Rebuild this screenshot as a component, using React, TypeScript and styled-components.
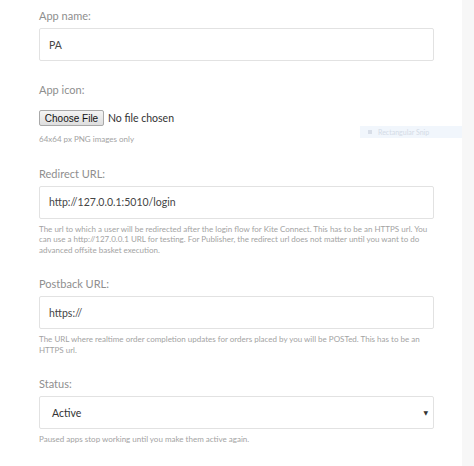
import { createGlobalStyle, styled } from 'styled-components'

const GlobalStyle = createGlobalStyle`
  html, body {
    margin: 0;
    padding: 0;
    background: #ffffff;
  }
  body {
    font-family: Lato, "Open Sans", "DejaVu Sans", sans-serif;
  }
`

type Field = {
  label: string
  value: string
  help?: string
  kind: 'text' | 'file' | 'select'
}

const fields: Field[] = [
  { label: 'App name:', value: 'PA', kind: 'text' },
  { label: 'App icon:', value: '', help: '64x64 px PNG images only', kind: 'file' },
  {
    label: 'Redirect URL:',
    value: 'http://127.0.0.1:5010/login',
    help: 'The url to which a user will be redirected after the login flow for Kite Connect. This has to be an HTTPS url. You can use a http://127.0.0.1 URL for testing. For Publisher, the redirect url does not matter until you want to do advanced offsite basket execution.',
    kind: 'text',
  },
  {
    label: 'Postback URL:',
    value: 'https://',
    help: 'The URL where realtime order completion updates for orders placed by you will be POSTed. This has to be an HTTPS url.',
    kind: 'text',
  },
  {
    label: 'Status:',
    value: 'Active',
    help: 'Paused apps stop working until you make them active again.',
    kind: 'select',
  },
]

export default function App() {
  return <Page>
    <GlobalStyle />
    <Form>
      {fields.map((field) => (
        <Group key={field.label}>
          <Label>{field.label}</Label>
          {field.kind === 'text' && <TextBox>{field.value}</TextBox>}
          {field.kind === 'file' && (
            <FileRow>
              <FileButton type="button">Choose File</FileButton>
              <FileName>No file chosen</FileName>
            </FileRow>
          )}
          {field.kind === 'select' && (
            <SelectBox>
              <span>{field.value}</span>
              <Caret>▼</Caret>
            </SelectBox>
          )}
          {field.help && <Help $tight={field.kind === 'file'}>{field.help}</Help>}
        </Group>
      ))}
    </Form>
    <Gutter />
    <SnipTip><SnipIcon />Rectangular Snip</SnipTip>
  </Page>
}

const Page = styled.div`
  position: relative;
  display: flex;
  min-height: 466px;
  overflow: hidden;
`
const Form = styled.div`
  flex: 1;
  display: flex;
  flex-direction: column;
  gap: 21px;
  padding: 8px 28px 0 39px;
`
const Group = styled.div`
  display: flex;
  flex-direction: column;
`
const Label = styled.div`
  font-size: 11px;
  line-height: 16px;
  color: #8e8e8e;
  margin-bottom: 4px;
`
const TextBox = styled.div`
  height: 33px;
  box-sizing: border-box;
  border: 1px solid #e2e2e2;
  border-radius: 2px;
  padding: 0 9px;
  display: flex;
  align-items: center;
  font-size: 10.5px;
  color: #454545;
`
const FileRow = styled.div`
  display: flex;
  align-items: center;
  gap: 4px;
  margin-top: 8px;
`
const FileButton = styled.button`
  height: 16px;
  width: 65px;
  padding: 0;
  box-sizing: border-box;
  border: 1px solid #a9a9a9;
  border-radius: 2px;
  background: linear-gradient(#f4f4f4, #dedede);
  font-family: "Liberation Sans", Arial, sans-serif;
  font-size: 10px;
  color: #111111;
`
const FileName = styled.span`
  font-size: 10.5px;
  color: #333333;
`
const SelectBox = styled(TextBox)`
  justify-content: space-between;
  padding: 0 5px 0 12px;
  color: #333333;
`
const Caret = styled.span`
  font-size: 6px;
  color: #333333;
`
const Help = styled.div<{ $tight?: boolean }>`
  margin-top: ${(p) => (p.$tight ? '8px' : '5px')};
  font-size: 8px;
  line-height: 10.5px;
  color: #a3a3a3;
`
const Gutter = styled.div`
  width: 12px;
  background: #f7f7f7;
`
const SnipTip = styled.div`
  position: absolute;
  left: 360px;
  top: 126px;
  width: 102px;
  height: 12px;
  display: flex;
  align-items: center;
  gap: 6px;
  padding-left: 8px;
  box-sizing: border-box;
  background: #f1f6fc;
  font-size: 7px;
  color: #d4dbe6;
`
const SnipIcon = styled.span`
  width: 4px;
  height: 4px;
  background: #d8dee8;
`
